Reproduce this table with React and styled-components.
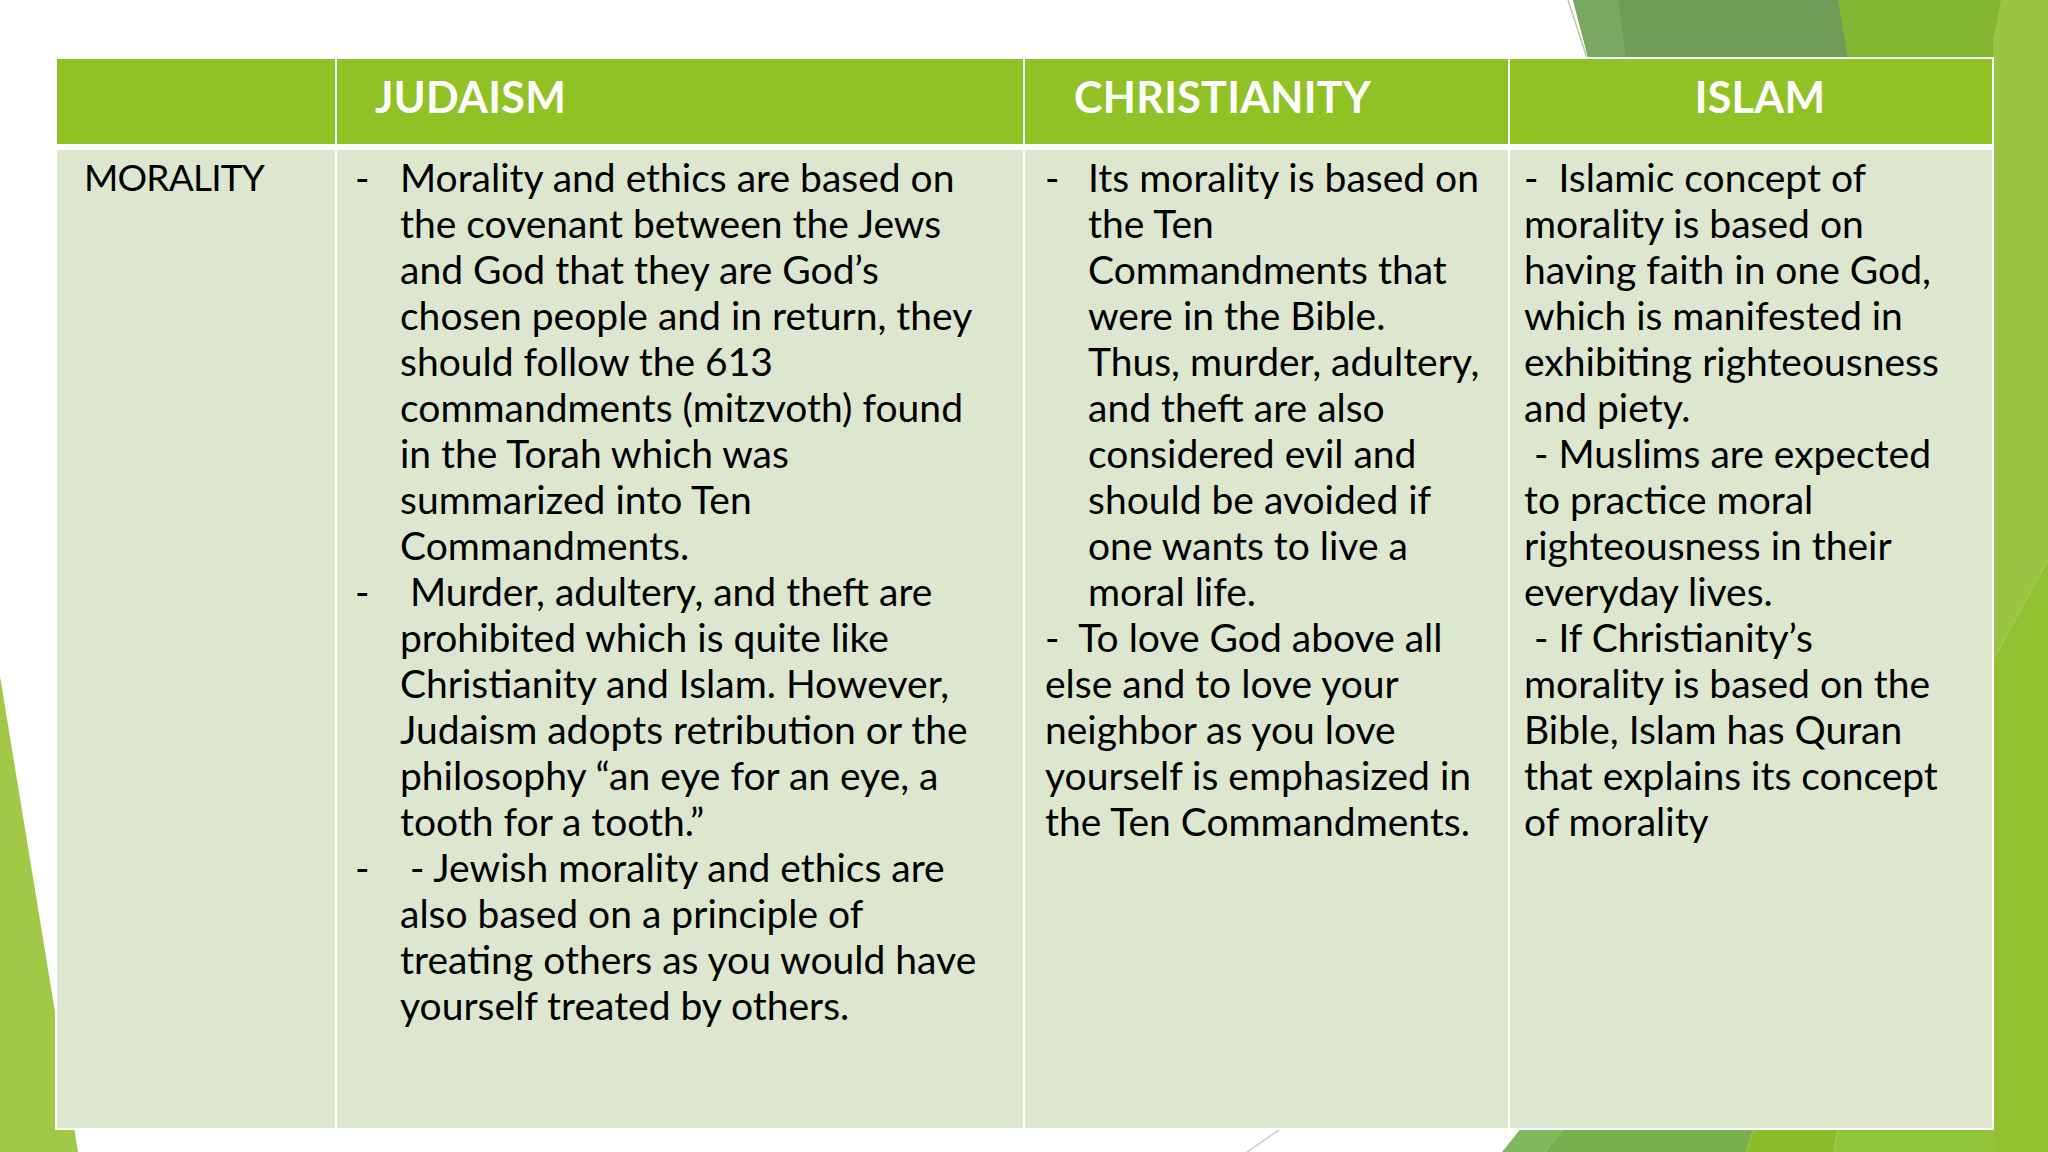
import React from 'react';
import styled, { createGlobalStyle } from 'styled-components';

const GlobalStyle = createGlobalStyle`
  html, body {
    margin: 0;
    padding: 0;
    background: #ffffff;
  }
  body {
    font-family: Lato, "Noto Sans", "DejaVu Sans", sans-serif;
    color: #000;
  }
`;

const Slide = styled.div`
  position: relative;
  width: 2048px;
  height: 1152px;
  overflow: hidden;
  background: #ffffff;
`;

const Backdrop = styled.svg`
  position: absolute;
  inset: 0;
  width: 2048px;
  height: 1152px;
  z-index: 0;
`;

const Content = styled.div`
  position: relative;
  z-index: 1;
  padding: 57px 0 0 55px;
`;

const Table = styled.div`
  display: grid;
  grid-template-columns: 278px 686px 483px 482px;
  grid-template-rows: 85px 978px;
  column-gap: 2px;
  row-gap: 6px;
  width: 1935px;
  padding: 2px;
  background: #ffffff;
`;

const HeadCell = styled.div`
  background: #90c226;
  color: #ffffff;
  font-weight: 700;
  font-size: 43px;
  letter-spacing: 0.3px;
  display: flex;
  align-items: center;
  justify-content: ${p => (p.center ? 'center' : 'flex-start')};
  padding: 0 0 11px ${p => p.indent || 0}px;
  box-sizing: border-box;
`;

const BodyCell = styled.div`
  background: #dde7d0;
  font-size: ${p => (p.caps ? 37 : 39)}px;
  line-height: 46px;
  letter-spacing: ${p => (p.caps ? '-0.8px' : 'normal')};
  padding: 4px 0 0 ${p => p.pad || 0}px;
  box-sizing: border-box;
  white-space: pre;
  overflow: hidden;
`;

const Bullet = styled.div`
  display: flex;
`;

const Dash = styled.span`
  width: ${p => p.w || 45}px;
  flex: none;
`;

const Lines = styled.div`
  display: flex;
  flex-direction: column;
`;

const judaism = [
  [
    'Morality and ethics are based on',
    'the covenant between the Jews',
    'and God that they are God’s',
    'chosen people and in return, they',
    'should follow the 613',
    'commandments (mitzvoth) found',
    'in the Torah which was',
    'summarized into Ten',
    'Commandments.',
  ],
  [
    ' Murder, adultery, and theft are',
    'prohibited which is quite like',
    'Christianity and Islam. However,',
    'Judaism adopts retribution or the',
    'philosophy “an eye for an eye, a',
    'tooth for a tooth.”',
  ],
  [
    ' - Jewish morality and ethics are',
    'also based on a principle of',
    'treating others as you would have',
    'yourself treated by others.',
  ],
];

const christianityBullet = [
  'Its morality is based on',
  'the Ten',
  'Commandments that',
  'were in the Bible.',
  'Thus, murder, adultery,',
  'and theft are also',
  'considered evil and',
  'should be avoided if',
  'one wants to live a',
  'moral life.',
];

const christianityRest = [
  '-  To love God above all',
  'else and to love your',
  'neighbor as you love',
  'yourself is emphasized in',
  'the Ten Commandments.',
];

const islam = [
  '-  Islamic concept of',
  'morality is based on',
  'having faith in one God,',
  'which is manifested in',
  'exhibiting righteousness',
  'and piety.',
  ' - Muslims are expected',
  'to practice moral',
  'righteousness in their',
  'everyday lives.',
  ' - If Christianity’s',
  'morality is based on the',
  'Bible, Islam has Quran',
  'that explains its concept',
  'of morality',
];

const LineList = ({ lines }) => (
  <Lines>
    {lines.map((l, i) => (
      <span key={i}>{l}</span>
    ))}
  </Lines>
);

const Decor = () => (
  <Backdrop viewBox="0 0 2048 1152">
    {/* left triangle */}
    <polygon points="0,676 78,1152 0,1152" fill="#a2c848" />
    {/* top right facets */}
    <polygon points="1573,0 1840,0 1950,600 1731,600" fill="#6f9c56" />
    <polygon points="1573,0 1618,0 1660,300 1652,300" fill="#79a961" />
    <polygon points="1838,0 2003,0 1990,300 1890,300" fill="#84b633" />
    <polygon points="2001,0 2048,0 2048,560 1993,660 1993,40" fill="#9ac443" />
    <polygon points="1993,660 2048,560 2048,1152 1993,1152" fill="#92c232" />
    {/* bottom right facets */}
    <polygon points="1502,1152 1560,1080 1600,1080 1545,1152" fill="#80b85f" />
    <polygon points="1545,1152 1600,1080 1770,1080 1746,1152" fill="#78b04f" />
    <polygon points="1746,1152 1770,1080 1845,1080 1834,1152" fill="#8bbd2a" />
    <polygon points="1834,1152 1845,1080 1994,1080 1994,1152" fill="#93c53a" />
    <line x1="1568" y1="0" x2="1587" y2="58" stroke="#b8c9ae" strokeWidth="1.5" />
    <line x1="1247" y1="1152" x2="1279" y2="1130" stroke="#c8c8c8" strokeWidth="1.5" />
  </Backdrop>
);

export default function App() {
  return (
    <>
      <GlobalStyle />
      <Slide>
        <Decor />
        <Content>
          <Table>
            <HeadCell />
            <HeadCell indent={38}>JUDAISM</HeadCell>
            <HeadCell indent={49}>CHRISTIANITY</HeadCell>
            <HeadCell center indent={18}>ISLAM</HeadCell>

            <BodyCell pad={27} caps>MORALITY</BodyCell>
            <BodyCell pad={18}>
              {judaism.map((b, i) => (
                <Bullet key={i}>
                  <Dash>-</Dash>
                  <LineList lines={b} />
                </Bullet>
              ))}
            </BodyCell>
            <BodyCell pad={20}>
              <Bullet>
                <Dash w={43}>-</Dash>
                <LineList lines={christianityBullet} />
              </Bullet>
              <LineList lines={christianityRest} />
            </BodyCell>
            <BodyCell pad={14}>
              <LineList lines={islam} />
            </BodyCell>
          </Table>
        </Content>
      </Slide>
    </>
  );
}
